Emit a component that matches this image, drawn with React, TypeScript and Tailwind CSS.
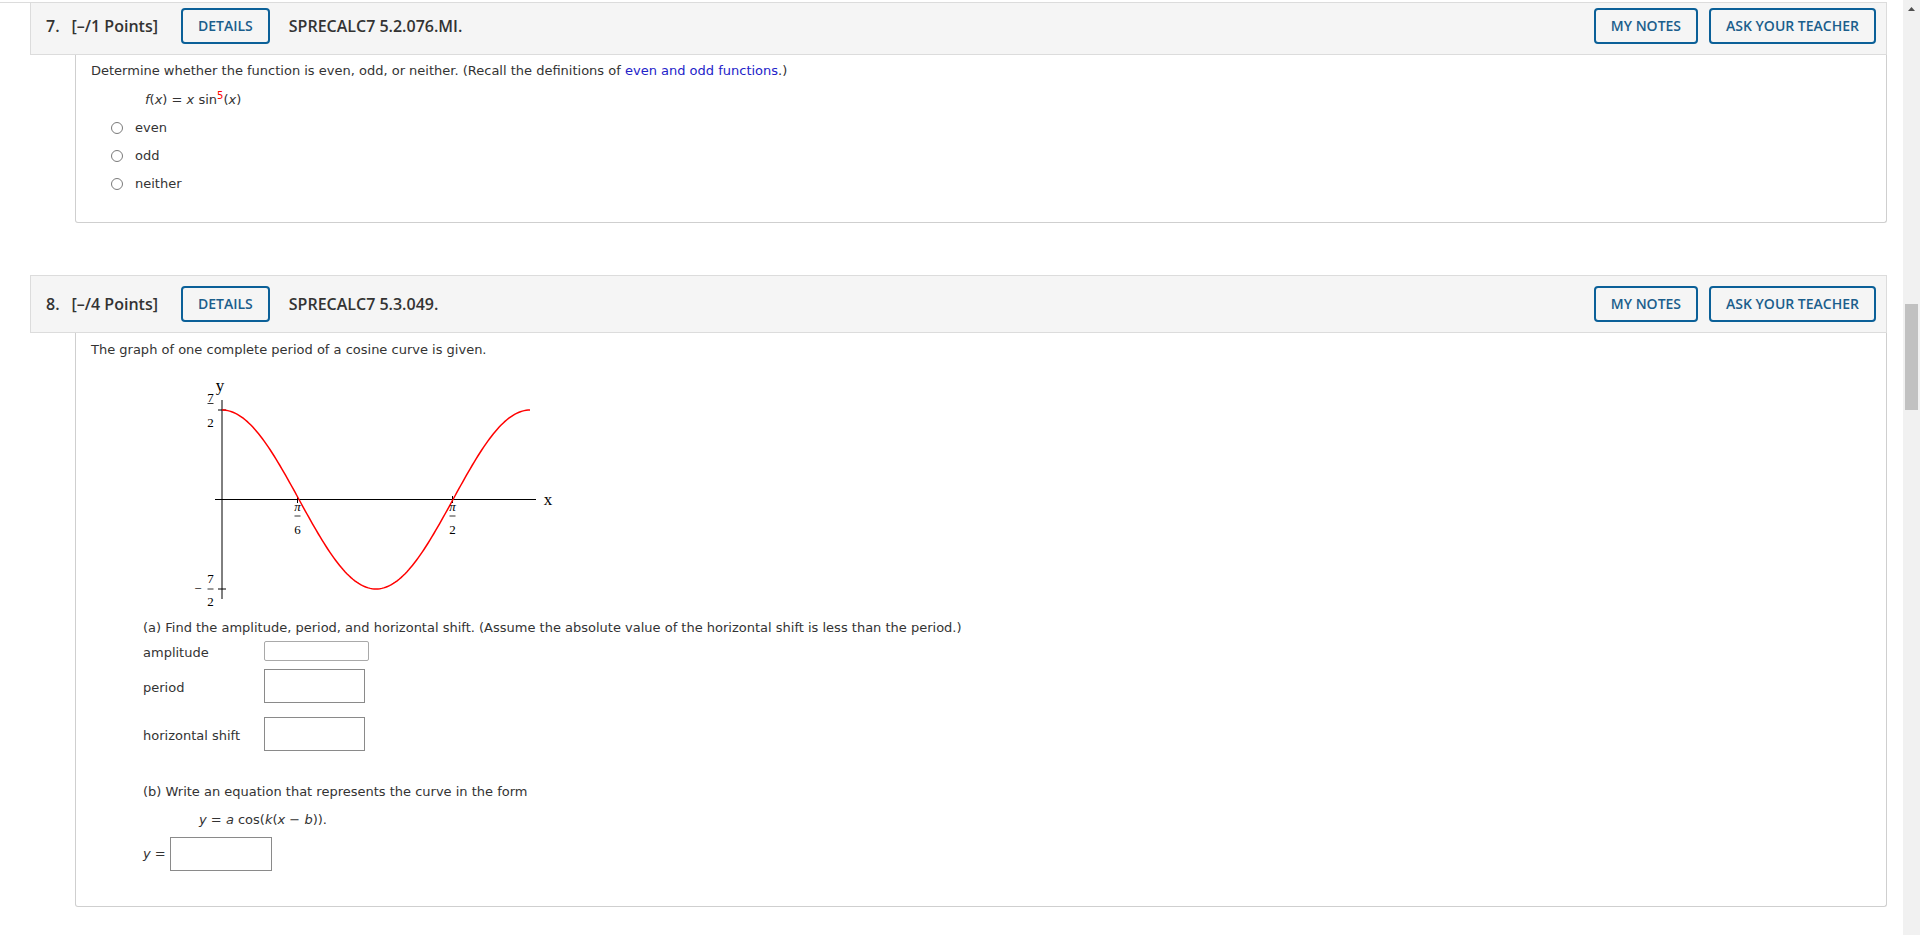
import * as React from 'react'

// one full period of the cosine, drawn in page pixels
const CURVE = Array.from({ length: 161 }, (_, i) => {
  const t = i / 160
  const x = 222 + 308 * t
  const y = 499.5 - 89.5 * Math.cos(2 * Math.PI * t)
  return `${i === 0 ? 'M' : 'L'}${x.toFixed(2)} ${y.toFixed(2)}`
}).join(' ')

function OutlineButton({ children }: { children: React.ReactNode }) {
  return (
    <button
      type="button"
      className="flex h-[36px] items-center rounded-[4px] border-2 border-[#0b6098] px-[15px] [font-family:'Open_Sans',sans-serif] text-[14px] font-semibold leading-none text-[#1b5e8c]"
    >
      {children}
    </button>
  )
}

interface HeaderProps {
  num: number
  points: string
  code: string
}

function HeaderRow({ num, points, code }: HeaderProps) {
  return (
    <div className="flex h-[36px] w-full items-center [font-family:'Open_Sans',sans-serif] text-[16px] font-semibold text-[#333]">
      <span>{num}.</span>
      <span className="ml-[12px]">{points}</span>
      <div className="ml-[23px]">
        <OutlineButton>DETAILS</OutlineButton>
      </div>
      <span className="ml-[19px]">{code}</span>
      <div className="ml-auto flex gap-[11px]">
        <OutlineButton>MY NOTES</OutlineButton>
        <OutlineButton>ASK YOUR TEACHER</OutlineButton>
      </div>
    </div>
  )
}

function Radio({ label }: { label: string }) {
  return (
    <label className="flex h-[28px] items-center pl-[20px]">
      <span className="h-[12px] w-[12px] rounded-full border border-[#7a7a7a] bg-white" />
      <span className="ml-[12px]">{label}</span>
    </label>
  )
}

function CosineGraph() {
  const serif = 'Liberation Serif, serif'
  return (
    <svg width={380} height={250} viewBox="180 370 380 250" className="ml-[89px] mt-[12px] block">
      {/* axes */}
      <line x1={222} y1={400} x2={222} y2={599} stroke="#000" strokeWidth={1} />
      <line x1={215} y1={499.5} x2={536} y2={499.5} stroke="#000" strokeWidth={1} />
      {/* ticks */}
      <line x1={218} y1={410} x2={226} y2={410} stroke="#000" strokeWidth={1} />
      <line x1={218} y1={589} x2={226} y2={589} stroke="#000" strokeWidth={1} />
      <line x1={297.5} y1={496} x2={297.5} y2={503} stroke="#000" strokeWidth={1} />
      <line x1={452.5} y1={496} x2={452.5} y2={503} stroke="#000" strokeWidth={1} />

      <path d={CURVE} fill="none" stroke="#ff0000" strokeWidth={1.5} />

      {/* axis names */}
      <text x={220} y={391} fontFamily={serif} fontSize={17} textAnchor="middle" fill="#000">
        y
      </text>
      <text x={548} y={505} fontFamily={serif} fontSize={17} textAnchor="middle" fill="#000">
        x
      </text>

      {/* 7/2 */}
      <text x={210.5} y={401.5} fontFamily={serif} fontSize={13} textAnchor="middle" fill="#000">
        7
      </text>
      <line x1={207.5} y1={403.5} x2={213.5} y2={403.5} stroke="#000" strokeWidth={0.8} />
      <text x={210.5} y={426.5} fontFamily={serif} fontSize={13} textAnchor="middle" fill="#000">
        2
      </text>

      {/* -7/2 */}
      <text x={198} y={593} fontFamily={serif} fontSize={13} textAnchor="middle" fill="#000">
        −
      </text>
      <text x={210.5} y={582.5} fontFamily={serif} fontSize={13} textAnchor="middle" fill="#000">
        7
      </text>
      <line x1={207.5} y1={589} x2={213.5} y2={589} stroke="#000" strokeWidth={0.8} />
      <text x={210.5} y={605.5} fontFamily={serif} fontSize={13} textAnchor="middle" fill="#000">
        2
      </text>

      {/* pi/6 */}
      <text x={297.5} y={511} fontFamily={serif} fontSize={13} fontStyle="italic" textAnchor="middle" fill="#000">
        π
      </text>
      <line x1={294.5} y1={516} x2={300.5} y2={516} stroke="#000" strokeWidth={0.8} />
      <text x={297.5} y={534} fontFamily={serif} fontSize={13} textAnchor="middle" fill="#000">
        6
      </text>

      {/* pi/2 */}
      <text x={452.5} y={511} fontFamily={serif} fontSize={13} fontStyle="italic" textAnchor="middle" fill="#000">
        π
      </text>
      <line x1={449.5} y1={516} x2={455.5} y2={516} stroke="#000" strokeWidth={0.8} />
      <text x={452.5} y={534} fontFamily={serif} fontSize={13} textAnchor="middle" fill="#000">
        2
      </text>
    </svg>
  )
}

function AnswerBox({ className }: { className: string }) {
  return <span className={`block border border-[#8a8a8a] bg-white ${className}`} />
}

export default function App() {
  return (
    <div className="flex h-[935px] overflow-hidden bg-white">
      <main className="flex-1">
        <div className="mr-[16px] mt-[2px] h-px bg-[#dcdcdc]" />

        <div className="pl-[30px] pr-[16px] [font-family:'DejaVu_Sans','Bitstream_Vera_Sans',Verdana,sans-serif] text-[13px] leading-[16px] text-[#333]">
          {/* question 7 */}
          <div className="flex h-[52px] items-start border-x border-b border-[#dcdcdc] bg-[#f5f5f5] pl-[15px] pr-[10px] pt-[5px]">
            <HeaderRow num={7} points="[–/1 Points]" code="SPRECALC7 5.2.076.MI." />
          </div>

          <div className="ml-[45px] h-[168px] rounded-b-[3px] border-x border-b border-[#cfcfcf] pl-[15px] pt-[8px]">
            <p>
              Determine whether the function is even, odd, or neither. (Recall the definitions of{' '}
              <a className="text-[#2323c9]">even and odd functions</a>.)
            </p>
            <p className="ml-[54px] mt-[13px]">
              <i>f</i>(<i>x</i>) = <i>x</i> sin<sup className="text-[10px] text-[#ff0000]">5</sup>(<i>x</i>)
            </p>
            <div className="mt-[6px]">
              <Radio label="even" />
              <Radio label="odd" />
              <Radio label="neither" />
            </div>
          </div>

          {/* question 8 */}
          <div className="mt-[52px] flex h-[58px] items-center border border-[#dcdcdc] bg-[#f5f5f5] pl-[15px] pr-[10px]">
            <HeaderRow num={8} points="[–/4 Points]" code="SPRECALC7 5.3.049." />
          </div>

          <div className="ml-[45px] h-[574px] rounded-b-[3px] border-x border-b border-[#cfcfcf] pl-[15px] pt-[9px]">
            <p>The graph of one complete period of a cosine curve is given.</p>

            <CosineGraph />

            <div className="ml-[52px]">
              <p>
                (a) Find the amplitude, period, and horizontal shift. (Assume the absolute value of the horizontal
                shift is less than the period.)
              </p>

              <div className="mt-[5px] flex h-[20px] items-center">
                <span className="mt-[3px] w-[121px]">amplitude</span>
                <AnswerBox className="h-[20px] w-[105px] rounded-[2px] border-[#a9a9a9]" />
              </div>
              <div className="mt-[8px] flex h-[34px] items-center">
                <span className="mt-[3px] w-[121px]">period</span>
                <AnswerBox className="h-[34px] w-[101px]" />
              </div>
              <div className="mt-[14px] flex h-[34px] items-center">
                <span className="mt-[3px] w-[121px]">horizontal shift</span>
                <AnswerBox className="h-[34px] w-[101px]" />
              </div>

              <p className="mt-[33px]">(b) Write an equation that represents the curve in the form</p>
              <p className="ml-[56px] mt-[12px]">
                <i>y</i> = <i>a</i> cos(<i>k</i>(<i>x</i> − <i>b</i>)).
              </p>
              <div className="mt-[9px] flex h-[34px] items-center">
                <span className="w-[27px]">
                  <i>y</i> =
                </span>
                <AnswerBox className="h-[34px] w-[102px]" />
              </div>
            </div>
          </div>
        </div>
      </main>

      {/* page scrollbar */}
      <aside className="flex w-[17px] flex-col bg-[#f1f1f1]">
        <div className="flex h-[17px] items-center justify-center">
          <svg width="7" height="4" viewBox="0 0 7 4">
            <path d="M0 4 L3.5 0 L7 4 Z" fill="#505050" />
          </svg>
        </div>
        <div className="mx-[2px] mt-[287px] h-[106px] bg-[#c1c1c1]" />
      </aside>
    </div>
  )
}
